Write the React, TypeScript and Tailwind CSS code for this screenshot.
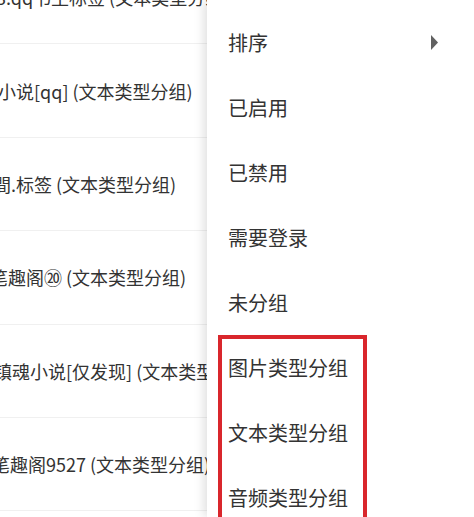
import React from 'react';

const sources = [
  { name: '3.qq书生标签 (文本类型分组)', shift: 'ml-[-4px]' },
  { name: '小说[qq] (文本类型分组)', shift: 'ml-[-2px]' },
  { name: '間.标签 (文本类型分组)', shift: 'ml-[-7px]' },
  { name: '笔趣阁⑳ (文本类型分组)', shift: 'ml-[-10px]' },
  { name: '镇魂小说[仅发现] (文本类型分组)', shift: 'ml-[-6px]' },
  { name: '笔趣阁9527 (文本类型分组)', shift: 'ml-[-8px]' },
  { name: '', shift: '' },
];

const menuItems = ['排序', '已启用', '已禁用', '需要登录', '未分组', '图片类型分组', '文本类型分组', '音频类型分组'];

const SubmenuArrow: React.FC = () => (
  <svg width="8" height="15" viewBox="0 0 8 15" className="shrink-0">
    <polygon points="0,0 7,7.5 0,15" fill="#616161" />
  </svg>
);

export default function App() {
  return (
    <div
      className="relative w-[474px] h-[517px] overflow-hidden bg-white"
      style={{ fontFamily: '"Noto Sans CJK SC", "Noto Sans", sans-serif' }}
    >
      {/* book source list behind the menu */}
      <div className="mt-[-49px] flex flex-col">
        {sources.map((s, i) => (
          <div key={i} className="h-[93.4px] border-b border-[#f0f0f0] flex items-center overflow-hidden">
            <span className={`${s.shift} whitespace-nowrap text-[18px] leading-none text-[#333333]`}>{s.name}</span>
          </div>
        ))}
      </div>

      {/* dropdown menu */}
      <div className="absolute top-0 bottom-0 left-[207px] right-0 bg-white shadow-[-3px_0_10px_rgba(0,0,0,0.13)]">
        <div className="pt-[10px] flex flex-col">
          {menuItems.map((item, i) => (
            <div key={item} className="h-[65px] pl-[21px] pr-[35px] flex items-center justify-between">
              <span className="text-[20px] leading-none text-[#333333] whitespace-nowrap">{item}</span>
              {i === 0 && <SubmenuArrow />}
            </div>
          ))}
        </div>

        {/* highlight box */}
        <div className="absolute left-[11px] top-[335px] w-[149px] h-[200px] border-4 border-[#d9262c]" />
      </div>
    </div>
  );
}
